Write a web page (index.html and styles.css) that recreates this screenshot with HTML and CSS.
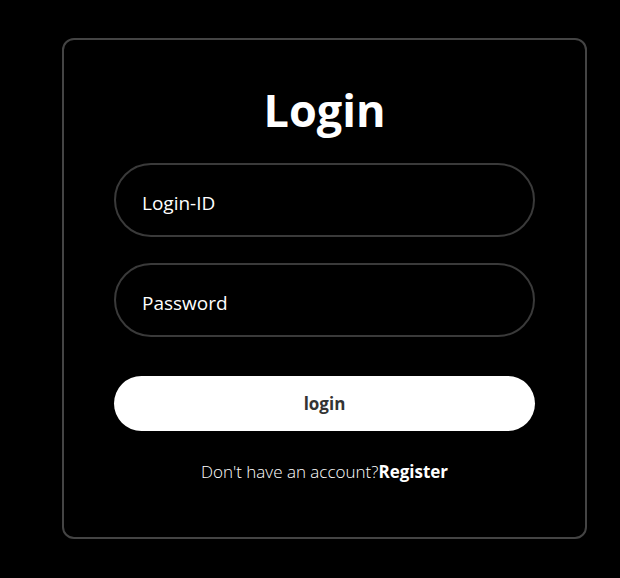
FILE: index.html
```html
<!DOCTYPE html>
<html lang="en">
<head>
    <meta charset="UTF-8">
    <meta name="viewport" content="width=device-width, initial-scale=1.0">
    <title>Login</title>
    <link rel="stylesheet" href="styles.css">
</head>
<body>

    <div class="login-box">
        <h1>Login</h1>
        <form class="login-form" onsubmit="return false">
            <input class="field" type="text" placeholder="Login-ID">
            <input class="field" type="password" placeholder="Password">
            <button class="login-btn" type="submit">login</button>
        </form>
        <p class="register">Don't have an account?<a href="#">Register</a></p>
    </div>

</body>
</html>
```

FILE: styles.css
```css
body {
    font-family: 'Open Sans', 'Noto Sans', sans-serif;
    background-color: #000;
    color: #fff;
    margin: 0;
    padding: 38px 0 0 62px;
}
.login-box {
    box-sizing: border-box;
    width: 525px;
    height: 501px;
    border: 2px solid #444;
    border-radius: 12px;
    padding: 0 50px;
}
h1 {
    margin: 42px 0 0;
    font-size: 45px;
    line-height: 56px;
    font-weight: 700;
    text-align: center;
}
.login-form {
    display: flex;
    flex-direction: column;
    margin-top: 25px;
}
.field {
    box-sizing: border-box;
    height: 74px;
    margin-bottom: 26px;
    padding: 5px 26px 0;
    background: transparent;
    border: 2px solid #3a3a3a;
    border-radius: 40px;
    color: #fff;
    font-family: inherit;
    font-size: 19px;
    outline: none;
}
.field::placeholder {
    color: #fff;
}
.login-btn {
    height: 55px;
    margin-top: 13px;
    border: none;
    border-radius: 30px;
    background-color: #fff;
    color: #333;
    font-family: inherit;
    font-size: 17px;
    font-weight: 700;
    cursor: pointer;
}
.register {
    margin: 29px 0 0;
    font-size: 17px;
    font-weight: 300;
    line-height: 24px;
    text-align: center;
}
.register a {
    color: #fff;
    font-weight: 700;
    text-decoration: none;
}
```
